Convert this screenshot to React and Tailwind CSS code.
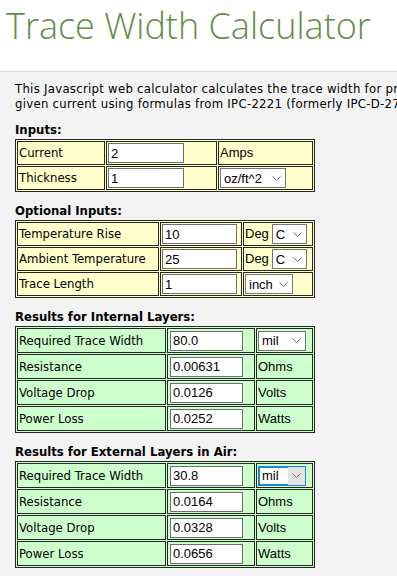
const BODY = "font-['DejaVu_Sans_Condensed','DejaVu_Sans',sans-serif] font-stretch-condensed";
const ARIAL = "font-['Liberation_Sans',Arial,sans-serif]";

function Chevron() {
  return (
    <svg width="9" height="5" viewBox="0 0 9 5" className="shrink-0">
      <polyline points="0.5,0.5 4.5,4.5 8.5,0.5" fill="none" stroke="#6f6f6f" strokeWidth="1" />
    </svg>
  );
}

function Select({ value, w, focused }) {
  return (
    <div
      className={`${w} h-[20px] flex items-center bg-white border ${
        focused ? "border-[#1a8ad8] ring-1 ring-inset ring-[#1a8ad8]" : "border-[#767676]"
      }`}
    >
      <span className={`flex-1 pl-[3px] text-[13px] text-black leading-none ${ARIAL}`}>{value}</span>
      <span
        className={`h-full w-[17px] flex items-center justify-center ${
          focused ? "bg-[#e3e3e3]" : ""
        }`}
      >
        <Chevron />
      </span>
    </div>
  );
}

function Field({ value, w }) {
  return (
    <input
      readOnly
      value={value}
      className={`${w} h-[20px] bg-white border border-[#6f6f6f] px-[2px] text-[13px] text-black outline-none ${ARIAL}`}
    />
  );
}

function Unit({ unit }) {
  if (unit.text) {
    return <span className={`text-[13px] text-black ${ARIAL}`}>{unit.text}</span>;
  }
  if (unit.deg) {
    return (
      <div className="flex items-center gap-[3px]">
        <span className={`text-[13px] text-black ${ARIAL}`}>Deg</span>
        <Select value="C" w="w-[35px]" />
      </div>
    );
  }
  return <Select value={unit.select} w={unit.w} focused={unit.focused} />;
}

function CalcTable({ bg, cols, rowH, inputW, inputPad, rows }) {
  return (
    <div className={`w-[300px] border border-[#262626] p-[1px] flex flex-col gap-[1px] ${bg}`}>
      {rows.map((r) => (
        <div key={r.label} className={`grid gap-[1px] ${cols}`}>
          <div className={`${rowH} border border-[#262626] flex items-center pl-[1px] text-[13px] text-black ${BODY}`}>
            {r.label}
          </div>
          <div className={`${rowH} border border-[#262626] flex items-center ${inputPad}`}>
            <Field value={r.value} w={inputW} />
          </div>
          <div className={`${rowH} border border-[#262626] flex items-center pl-[1px]`}>
            <Unit unit={r.unit} />
          </div>
        </div>
      ))}
    </div>
  );
}

function Section({ title, children }) {
  return (
    <div className="flex flex-col">
      <div className={`text-[13px] leading-[15px] font-bold text-black ${BODY}`}>{title}</div>
      <div className="mt-[2px]">{children}</div>
    </div>
  );
}

export default function App() {
  const inputs = [
    { label: "Current", value: "2", unit: { text: "Amps" } },
    { label: "Thickness", value: "1", unit: { select: "oz/ft^2", w: "w-[66px]" } },
  ];
  const optional = [
    { label: "Temperature Rise", value: "10", unit: { deg: true } },
    { label: "Ambient Temperature", value: "25", unit: { deg: true } },
    { label: "Trace Length", value: "1", unit: { select: "inch", w: "w-[48px]" } },
  ];
  const internal = [
    { label: "Required Trace Width", value: "80.0", unit: { select: "mil", w: "w-[48px]" } },
    { label: "Resistance", value: "0.00631", unit: { text: "Ohms" } },
    { label: "Voltage Drop", value: "0.0126", unit: { text: "Volts" } },
    { label: "Power Loss", value: "0.0252", unit: { text: "Watts" } },
  ];
  const external = [
    { label: "Required Trace Width", value: "30.8", unit: { select: "mil", w: "w-[48px]", focused: true } },
    { label: "Resistance", value: "0.0164", unit: { text: "Ohms" } },
    { label: "Voltage Drop", value: "0.0328", unit: { text: "Volts" } },
    { label: "Power Loss", value: "0.0656", unit: { text: "Watts" } },
  ];

  return (
    <div className="w-full h-[576px] overflow-hidden bg-[#f3f3f3]">
      {/* Header */}
      <div className="h-[72px] bg-white border-b border-[#dcdcdc] pt-[8px] pl-[6px]">
        <h1 className="text-[36px] leading-[36px] font-light text-[#5f8f47] font-['Open_Sans',sans-serif] whitespace-nowrap">
          Trace Width Calculator
        </h1>
      </div>

      {/* Body */}
      <div className="w-[900px] pl-[15px] pt-[9px] flex flex-col gap-[11px]">
        <p className={`text-[13px] leading-[15px] tracking-[0.28px] text-black whitespace-nowrap ${BODY}`}>
          This Javascript web calculator calculates the trace width for printed circuit board conductors for a
          <br />
          given current using formulas from IPC-2221 (formerly IPC-D-275).
        </p>

        <Section title="Inputs:">
          <CalcTable
            bg="bg-[#ffffcc]"
            cols="grid-cols-[88px_111px_95px]"
            rowH="h-[24px]"
            inputW="w-[76px]"
            inputPad="pl-[1px]"
            rows={inputs}
          />
        </Section>

        <Section title="Optional Inputs:">
          <CalcTable
            bg="bg-[#ffffcc]"
            cols="grid-cols-[142px_82px_70px]"
            rowH="h-[24px]"
            inputW="w-[75px]"
            inputPad="pl-[1px]"
            rows={optional}
          />
        </Section>

        <Section title="Results for Internal Layers:">
          <CalcTable
            bg="bg-[#ccffcc]"
            cols="grid-cols-[149px_88px_57px]"
            rowH="h-[25px]"
            inputW="w-[73px]"
            inputPad="pl-[2px]"
            rows={internal}
          />
        </Section>

        <Section title="Results for External Layers in Air:">
          <CalcTable
            bg="bg-[#ccffcc]"
            cols="grid-cols-[149px_88px_57px]"
            rowH="h-[25px]"
            inputW="w-[73px]"
            inputPad="pl-[2px]"
            rows={external}
          />
        </Section>
      </div>
    </div>
  );
}
